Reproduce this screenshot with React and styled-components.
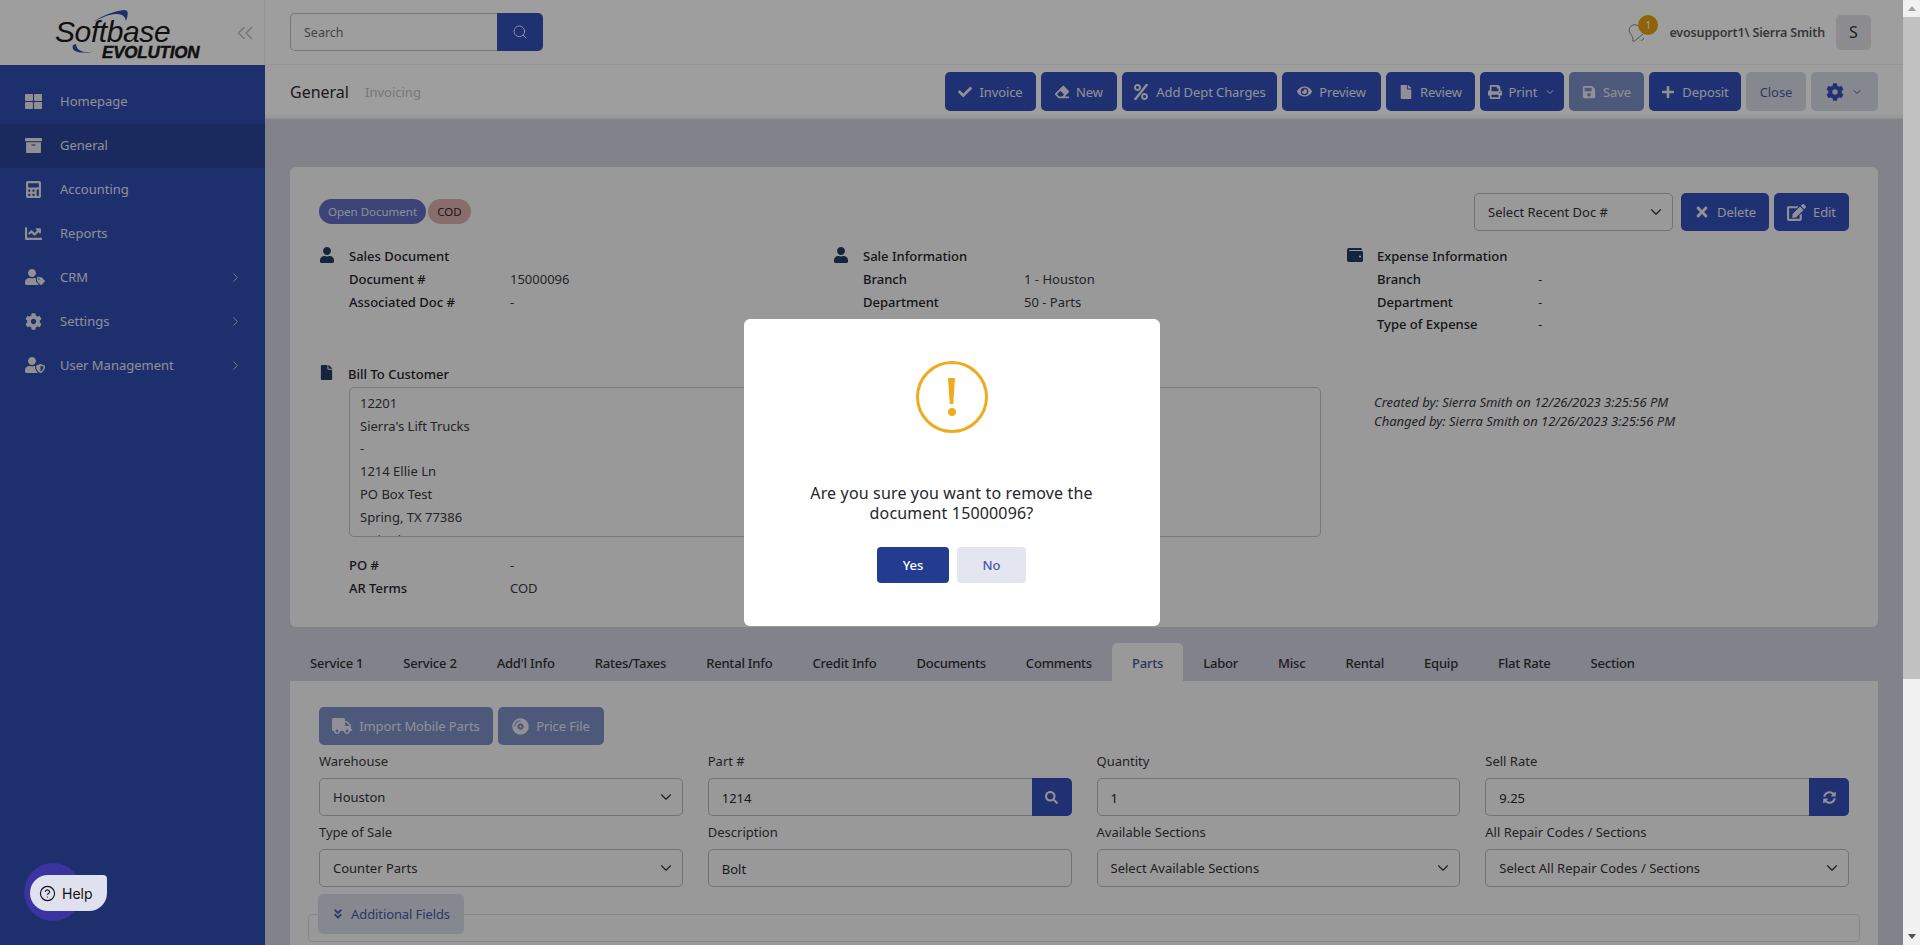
import React from "react";
import styled, { createGlobalStyle } from "styled-components";
import { Bell, ChevronDown, ChevronRight, ChevronsLeft, CircleHelp, Search } from "lucide-react";
import {
  FaAngleDoubleDown, FaArchive, FaCalculator, FaChartLine, FaCheck, FaCog, FaCompactDisc, FaEdit, FaEraser, FaEye,
  FaFile, FaPercent, FaPlus, FaPrint, FaSave, FaSearch, FaSyncAlt, FaThLarge, FaTimes, FaTruck, FaUser,
  FaUserShield, FaUserTag, FaWallet,
} from "react-icons/fa";

const FONT = `"Noto Sans", "Open Sans", sans-serif`;
const PRIMARY = "#324fb9";

const Global = createGlobalStyle`
  html, body { margin: 0; padding: 0; height: 100%; overflow: hidden; }
  body { font-family: ${FONT}; font-size: 13px; color: #2a2a2e; }
  * { box-sizing: border-box; }
`;

const Shell = styled.div`display: flex; width: 1920px; height: 945px; overflow: hidden;`;
const Viewport = styled.div`position: relative; display: flex; flex: 1; height: 945px; overflow: hidden; background: #d0d2df;`;

const ScrollTrack = styled.div`
  width: 17px; height: 945px; background: #f1f1f1; display: flex; flex-direction: column; flex: none;
`;
const ScrollArrow = styled.div`
  height: 17px; flex: none; display: flex; align-items: center; justify-content: center;
  &::after {
    content: ""; border-left: 4px solid transparent; border-right: 4px solid transparent;
    ${(p) => (p.$down ? "border-top: 5px solid #505050;" : "border-bottom: 5px solid #a3a3a3;")}
  }
`;
const ScrollThumb = styled.div`height: 662px; flex: none; background: #c1c1c1;`;
const ScrollGap = styled.div`flex: 1;`;

const Sidebar = styled.aside`width: 265px; flex: none; display: flex; flex-direction: column; background: #304cb1;`;
const Brand = styled.div`
  height: 65px; flex: none; background: #fff; display: flex; align-items: center; padding-left: 55px; position: relative;
  border-right: 1px solid #f0f0f0;
`;
const Logo = styled.div`position: relative; width: 150px; height: 58px; flex: none;`;
const LogoWord = styled.span`
  position: absolute; left: 0; top: 14px; font: italic 400 30px/28px "Liberation Sans", sans-serif;
  letter-spacing: -0.4px; color: #1a1a1a;
`;
const LogoSub = styled.span`
  position: absolute; left: 47px; top: 42px; font: italic 700 17px/14px "Liberation Sans", sans-serif;
  letter-spacing: -0.2px; color: #1a1a1a; -webkit-text-stroke: 0.5px #1a1a1a;
`;
const LogoSwoosh = styled.svg`position: absolute; left: 0; top: 0;`;
const Collapse = styled.span`position: absolute; left: 232px; top: 20px; color: #c4c4c8; display: flex;`;

const Nav = styled.nav`display: flex; flex-direction: column; padding-top: 15px;`;
const NavItem = styled.a`
  height: 44px; display: flex; align-items: center; padding: 0 22px 2px 25px;
  font-size: 13px; background: ${(p) => (p.$active ? "#2c4498" : "transparent")};
  svg.main {
    width: ${(p) => (p.$wide ? 20 : 17)}px; height: ${(p) => (p.$wide ? 20 : 17)}px;
    margin-right: ${(p) => (p.$wide ? 15 : 18)}px; flex: none; color: #e8e8ee;
  }
  svg.arrow { margin-left: auto; color: #c4c8de; }
  span { color: #e4e6f2; }
`;

const Main = styled.main`flex: 1; min-width: 0; display: flex; flex-direction: column;`;
const TopBar = styled.header`
  height: 65px; flex: none; background: #fff; display: flex; align-items: center; padding: 0 32px 0 25px;
  border-bottom: 1px solid #f0f0f0;
`;
const SearchGroup = styled.div`display: flex; width: 253px; height: 38px;`;
const SearchField = styled.div`
  flex: 1; border: 1px solid #bfc0c8; border-right: 0; border-radius: 5px 0 0 5px; padding: 0 13px;
  display: flex; align-items: center; color: #6d6d72; font-size: 12.5px;
`;
const SearchBtn = styled.button`
  width: 46px; border: 0; background: ${PRIMARY}; border-radius: 0 5px 5px 0; color: #e8e8f0;
  display: flex; align-items: center; justify-content: center;
`;
const UserArea = styled.div`margin-left: auto; display: flex; align-items: center;`;
const BellWrap = styled.div`position: relative; width: 24px; height: 30px; margin: 2px 20px 0 0; color: #8b8b90; display: flex; align-items: center; justify-content: center;`;
const BellBadge = styled.span`
  position: absolute; right: -9px; top: -3px; width: 20px; height: 20px; border-radius: 50%; background: #e9a00f;
  color: #fff; font-size: 10px; display: flex; align-items: center; justify-content: center;
`;
const UserName = styled.span`font-size: 12.5px; font-weight: 600; letter-spacing: -0.15px; color: #5b5b60; margin-right: 11px;`;
const Avatar = styled.span`
  width: 35px; height: 35px; border-radius: 5px; background: #e4e4e8; display: flex; align-items: center;
  justify-content: center; font-size: 16px; color: #333;
`;

const ActionBar = styled.div`
  height: 54px; flex: none; background: #fff; display: flex; align-items: center; padding: 0 25px;
  border-bottom: 1px solid #e8e8e8; box-shadow: inset 0 -3px 0 #f5f5f5;
`;
const Crumb = styled.span`font-size: 16px; color: #2c2c30; margin-right: 16px;`;
const CrumbSub = styled.span`font-size: 13px; color: #c0c0c5;`;
const Actions = styled.div`margin-left: auto; display: flex; gap: 5px;`;
const Btn = styled.button`
  height: ${(p) => p.$h || 39}px; width: ${(p) => p.$w}px; border: 0; border-radius: 5px; font-family: ${FONT}; font-size: 13px;
  letter-spacing: -0.1px; display: flex; align-items: center; justify-content: center; gap: 7px; padding: 0; white-space: nowrap;
  color: ${(p) => (p.$variant === "soft" ? "#4c5a9a" : "#e8e9f2")};
  background: ${(p) => (p.$variant === "soft" ? "#d9dbe8" : p.$variant === "faded" ? "#7d90c6" : PRIMARY)};
  svg { flex: none; }
`;

const Content = styled.div`flex: 1; min-height: 0; padding: 48px 25px 0;`;
const Card = styled.section`
  height: 460px; background: #f7f7f7; border-radius: 6px; padding: 32px 29px 0; display: flex; flex-direction: column;
`;
const CardTop = styled.div`display: flex; justify-content: space-between; height: 38px;`;
const Badges = styled.div`display: flex; gap: 2px; height: 25px;`;
const Badge = styled.span`
  height: 25px; border-radius: 13px; padding: 0 9px; font-size: 11.5px; display: flex; align-items: center;
  color: ${(p) => (p.$tone === "blue" ? "#e4e5f2" : "#3a2020")};
  background: ${(p) => (p.$tone === "blue" ? "#5f6cc0" : "#dcb0b0")};
`;
const DocControls = styled.div`display: flex; gap: 5px; margin-top: -6px;`;
const Select = styled.div`
  height: ${(p) => p.$h || 38}px; width: ${(p) => (p.$w ? p.$w + "px" : "100%")}; border: 1px solid #b9b9be; border-radius: 5px;
  display: flex; align-items: center; justify-content: space-between; padding: 0 7px 1px 13px; font-size: 13px; color: #333;
  margin-right: ${(p) => p.$mr || 0}px;
  svg { color: #333; flex: none; }
`;

const InfoGrid = styled.div`display: grid; grid-template-columns: 514px 514px 1fr; margin-top: 8px;`;
const InfoBlock = styled.div`display: grid; grid-template-columns: 30px 161px 1fr; grid-auto-rows: 22.7px; align-items: center;`;
const InfoIcon = styled.span`color: #243d60; display: flex; margin-top: -3px; grid-column: 1;`;
const InfoTitle = styled.span`font-weight: 500; font-size: 13px; color: #25252a; grid-column: 2 / 4;`;
const InfoLabel = styled.span`font-weight: 500; font-size: 13px; color: #25252a; grid-column: 2;`;
const InfoValue = styled.span`font-size: 13px; color: #3a3a3f; grid-column: 3; white-space: nowrap;`;

const BillRow = styled.div`display: grid; grid-template-columns: 1002px 1fr; margin-top: 27px;`;
const BillLeft = styled.div`display: flex; flex-direction: column;`;
const BillTitle = styled.div`display: flex; align-items: center; height: 22px; font-weight: 500; color: #25252a; svg { color: #243d60; margin-right: 14px; margin-top: -3px; }`;
const AddressBox = styled.div`
  margin: 2px 0 0 30px; height: 150px; border: 1px solid #c4c4c8; border-radius: 5px; padding: 4px 10px; overflow: hidden;
  line-height: 22.8px; font-size: 13px; color: #3a3a3f;
`;
const AddressLine = styled.div``;
const Audit = styled.div`padding: 30px 0 0 53px; font-style: italic; font-size: 13px; line-height: 19.5px; color: #38383d; white-space: nowrap;`;
const TermsBlock = styled(InfoBlock)`margin-top: 17px;`;

const Tabs = styled.div`display: flex; margin-top: 16px; height: 38px; align-items: stretch;`;
const Tab = styled.div`
  padding: 1px 20px 0; display: flex; align-items: center; font-size: 13px; letter-spacing: -0.2px; border-radius: 5px 5px 0 0; font-weight: 500;
  color: ${(p) => (p.$active ? "#45569f" : "#303034")};
  background: ${(p) => (p.$active ? "#f7f7f7" : "transparent")};
`;
const Panel = styled.section`background: #f7f7f7; height: 264px; padding: 26px 29px 0;`;
const PanelButtons = styled.div`display: flex; gap: 5px;`;
const FormGrid = styled.div`display: grid; grid-template-columns: repeat(4, 1fr); column-gap: 25px; margin-top: 7px;`;
const Field = styled.div`display: flex; flex-direction: column;`;
const FieldLabel = styled.label`font-size: 13px; height: 19px; line-height: 19px; color: #38383d; margin-bottom: 7px;`;
const FieldGap = styled.div`height: 7px;`;
const InputWrap = styled.div`display: flex; height: 38px;`;
const Input = styled.div`
  flex: 1; border: 1px solid #b9b9be; border-radius: ${(p) => (p.$joined ? "5px 0 0 5px" : "5px")}; display: flex; align-items: center;
  padding: 1px 13px 0; font-size: 13px; color: #2a2a2e; ${(p) => p.$joined && "border-right: 0;"}
`;
const AddonBtn = styled.button`
  width: 40px; border: 0; background: ${PRIMARY}; color: #e8e8f0; border-radius: 0 5px 5px 0; display: flex;
  align-items: center; justify-content: center;
`;
const MoreWrap = styled.div`position: relative; margin: 7px -11px 0; height: 48px;`;
const MoreBox = styled.div`position: absolute; left: 0; right: 0; top: 20px; height: 28px; border: 1px solid #dcdce0; border-radius: 4px;`;
const MoreBtn = styled.button`
  position: absolute; left: 10px; top: 0; width: 146px; height: 40px; border: 0; border-radius: 5px; background: #d9dbe8; color: #4c5a9a;
  font-family: ${FONT}; font-size: 13px; letter-spacing: -0.1px; display: flex; align-items: center; justify-content: center; gap: 7px;
`;

const Overlay = styled.div`
  position: absolute; inset: 0; background: rgba(0,0,0,0.38); display: flex; align-items: center; justify-content: center; z-index: 10;
`;
const Dialog = styled.div`
  width: 416px; height: 307px; background: #fff; border-radius: 6px; display: flex; flex-direction: column; align-items: center;
  padding-top: 42px;
`;
const WarnIcon = styled.div`
  width: 72px; height: 72px; border: 3.5px solid #f0ab1c; border-radius: 50%; display: flex; flex-direction: column;
  align-items: center; justify-content: center; gap: 4px;
`;
const WarnBar = styled.span`width: 7px; height: 26px; background: #f0ab1c; clip-path: polygon(0 0, 100% 0, 75% 100%, 25% 100%);`;
const WarnDot = styled.span`width: 8px; height: 8px; border-radius: 50%; background: #f0ab1c;`;
const DialogText = styled.p`margin: 50px 0 0; width: 300px; text-align: center; font-size: 16px; letter-spacing: 0.15px; line-height: 20px; color: #26262b;`;
const DialogActions = styled.div`display: flex; gap: 8px; margin-top: 24px;`;
const DialogBtn = styled.button`
  height: 36px; width: ${(p) => p.$w}px; border: 0; border-radius: 4px; font-family: ${FONT}; font-size: 13px; font-weight: 500;
  color: ${(p) => (p.$primary ? "#fff" : "#4a58a8")}; background: ${(p) => (p.$primary ? "#243c8f" : "#e3e6f0")};
`;

const HelpSpot = styled.div`
  position: absolute; left: 24px; top: 863px; width: 58px; height: 58px; border-radius: 50%; background: #3a33a0; z-index: 11;
`;
const HelpPill = styled.div`
  position: absolute; left: 30px; top: 875px; width: 77px; height: 36px; border-radius: 18px 4px 18px 18px; background: #e0e1ee;
  z-index: 12; display: flex; align-items: center; gap: 6px; padding-left: 9px; color: #111; font: 400 14px "Inter", sans-serif;
`;

const nav = [
  { l: "Homepage", I: FaThLarge }, { l: "General", I: FaArchive, active: true }, { l: "Accounting", I: FaCalculator },
  { l: "Reports", I: FaChartLine }, { l: "CRM", I: FaUserTag, arrow: true, wide: true }, { l: "Settings", I: FaCog, arrow: true },
  { l: "User Management", I: FaUserShield, arrow: true, wide: true },
];
const actions = [
  { l: "Invoice", I: FaCheck, w: 91, s: 14 }, { l: "New", I: FaEraser, w: 76, s: 14 }, { l: "Add Dept Charges", I: FaPercent, w: 155, s: 16 },
  { l: "Preview", I: FaEye, w: 99, s: 15 }, { l: "Review", I: FaFile, w: 89, s: 14 }, { l: "Print", I: FaPrint, w: 84, chev: true, s: 14 },
  { l: "Save", I: FaSave, w: 75, v: "faded", s: 14 }, { l: "Deposit", I: FaPlus, w: 92, s: 14 }, { l: "Close", w: 60, v: "soft" },
  { I: FaCog, w: 67, v: "soft", chev: true, s: 18 },
];
const tabs = ["Service 1", "Service 2", "Add'l Info", "Rates/Taxes", "Rental Info", "Credit Info", "Documents", "Comments", "Parts", "Labor", "Misc", "Rental", "Equip", "Flat Rate", "Section"];
const address = ["12201", "Sierra's Lift Trucks", "-", "1214 Ellie Ln", "PO Box Test", "Spring, TX 77386", "United States"];

function Info({ Icon, title, rows }) {
  return (
    <InfoBlock>
      <InfoIcon><Icon size={16} /></InfoIcon>
      <InfoTitle>{title}</InfoTitle>
      {rows.map(([k, v]) => (
        <React.Fragment key={k}>
          <InfoLabel>{k}</InfoLabel>
          <InfoValue>{v}</InfoValue>
        </React.Fragment>
      ))}
    </InfoBlock>
  );
}

export default function App() {
  return (
    <Shell>
      <Global />
      <Viewport>
        <Sidebar>
          <Brand>
            <Logo>
              <LogoSwoosh width="150" height="58" viewBox="0 0 150 58">
                <path d="M38 18 C48 11 60 7 69 6 C73 6 74 9 71 17 C70 11 66 10 60 10 C52 11 45 14 38 18 Z" fill="#2c4bb0" />
                <path d="M18 41 C15 50 30 50 47 46 C34 49 22 50 21 40 Z" fill="#2c4bb0" />
              </LogoSwoosh>
              <LogoWord>Softbase</LogoWord>
              <LogoSub>EVOLUTION</LogoSub>
            </Logo>
            <Collapse><ChevronsLeft size={26} strokeWidth={1.5} /></Collapse>
          </Brand>
          <Nav>
            {nav.map(({ l, I, active, arrow, wide }) => (
              <NavItem key={l} $active={active} $wide={wide}>
                <I className="main" />
                <span>{l}</span>
                {arrow && <ChevronRight className="arrow" size={15} strokeWidth={1.5} />}
              </NavItem>
            ))}
          </Nav>
        </Sidebar>
        <Main>
          <TopBar>
            <SearchGroup>
              <SearchField>Search</SearchField>
              <SearchBtn><Search size={16} strokeWidth={1.5} /></SearchBtn>
            </SearchGroup>
            <UserArea>
              <BellWrap>
                <Bell size={22} strokeWidth={1} style={{ transform: "rotate(-40deg)" }} />
                <BellBadge>1</BellBadge>
              </BellWrap>
              <UserName>evosupport1\ Sierra Smith</UserName>
              <Avatar>S</Avatar>
            </UserArea>
          </TopBar>
          <ActionBar>
            <Crumb>General</Crumb>
            <CrumbSub>Invoicing</CrumbSub>
            <Actions>
              {actions.map(({ l, I, w, v, chev, s }, i) => (
                <Btn key={i} $w={w} $variant={v}>
                  {I && <I size={s} color={v === "soft" ? "#324fb9" : undefined} />}
                  {l}
                  {chev && <ChevronDown size={12} />}
                </Btn>
              ))}
            </Actions>
          </ActionBar>
          <Content>
            <Card>
              <CardTop>
                <Badges>
                  <Badge $tone="blue">Open Document</Badge>
                  <Badge>COD</Badge>
                </Badges>
                <DocControls>
                  <Select $w={199} $mr={3}>Select Recent Doc # <ChevronDown size={18} strokeWidth={1.5} /></Select>
                  <Btn $w={88} $h={38}><FaTimes size={16} />Delete</Btn>
                  <Btn $w={75} $h={38}><FaEdit size={19} />Edit</Btn>
                </DocControls>
              </CardTop>
              <InfoGrid>
                <Info Icon={FaUser} title="Sales Document" rows={[["Document #", "15000096"], ["Associated Doc #", "-"]]} />
                <Info Icon={FaUser} title="Sale Information" rows={[["Branch", "1 - Houston"], ["Department", "50 - Parts"], ["Type of Sale", "Counter Parts Sales -T"]]} />
                <Info Icon={FaWallet} title="Expense Information" rows={[["Branch", "-"], ["Department", "-"], ["Type of Expense", "-"]]} />
              </InfoGrid>
              <BillRow>
                <BillLeft>
                  <BillTitle><FaFile size={15} />Bill To Customer</BillTitle>
                  <AddressBox>
                    {address.map((a) => <AddressLine key={a}>{a}</AddressLine>)}
                  </AddressBox>
                  <TermsBlock>
                    <InfoLabel>PO #</InfoLabel><InfoValue>-</InfoValue>
                    <InfoLabel>AR Terms</InfoLabel><InfoValue>COD</InfoValue>
                  </TermsBlock>
                </BillLeft>
                <Audit>
                  <div>Created by: Sierra Smith on 12/26/2023 3:25:56 PM</div>
                  <div>Changed by: Sierra Smith on 12/26/2023 3:25:56 PM</div>
                </Audit>
              </BillRow>
            </Card>
            <Tabs>
              {tabs.map((t) => <Tab key={t} $active={t === "Parts"}>{t}</Tab>)}
            </Tabs>
            <Panel>
              <PanelButtons>
                <Btn $w={174} $h={38} $variant="faded"><FaTruck size={20} />Import Mobile Parts</Btn>
                <Btn $w={106} $h={38} $variant="faded"><FaCompactDisc size={17} />Price File</Btn>
              </PanelButtons>
              <FormGrid>
                <Field>
                  <FieldLabel>Warehouse</FieldLabel>
                  <Select>Houston <ChevronDown size={18} strokeWidth={1.5} /></Select>
                  <FieldGap />
                  <FieldLabel>Type of Sale</FieldLabel>
                  <Select>Counter Parts <ChevronDown size={18} strokeWidth={1.5} /></Select>
                </Field>
                <Field>
                  <FieldLabel>Part #</FieldLabel>
                  <InputWrap><Input $joined>1214</Input><AddonBtn><FaSearch size={13} /></AddonBtn></InputWrap>
                  <FieldGap />
                  <FieldLabel>Description</FieldLabel>
                  <InputWrap><Input>Bolt</Input></InputWrap>
                </Field>
                <Field>
                  <FieldLabel>Quantity</FieldLabel>
                  <InputWrap><Input>1</Input></InputWrap>
                  <FieldGap />
                  <FieldLabel>Available Sections</FieldLabel>
                  <Select>Select Available Sections <ChevronDown size={18} strokeWidth={1.5} /></Select>
                </Field>
                <Field>
                  <FieldLabel>Sell Rate</FieldLabel>
                  <InputWrap><Input $joined>9.25</Input><AddonBtn><FaSyncAlt size={13} /></AddonBtn></InputWrap>
                  <FieldGap />
                  <FieldLabel>All Repair Codes / Sections</FieldLabel>
                  <Select>Select All Repair Codes / Sections <ChevronDown size={18} strokeWidth={1.5} /></Select>
                </Field>
              </FormGrid>
              <MoreWrap>
                <MoreBox />
                <MoreBtn><FaAngleDoubleDown size={12} />Additional Fields</MoreBtn>
              </MoreWrap>
            </Panel>
          </Content>
        </Main>
        <Overlay>
          <Dialog>
            <WarnIcon><WarnBar /><WarnDot /></WarnIcon>
            <DialogText>Are you sure you want to remove the document 15000096?</DialogText>
            <DialogActions>
              <DialogBtn $primary $w={72}>Yes</DialogBtn>
              <DialogBtn $w={69}>No</DialogBtn>
            </DialogActions>
          </Dialog>
        </Overlay>
        <HelpSpot />
        <HelpPill><CircleHelp size={17} strokeWidth={1.6} />Help</HelpPill>
      </Viewport>
      <ScrollTrack>
        <ScrollArrow />
        <ScrollThumb />
        <ScrollGap />
        <ScrollArrow $down />
      </ScrollTrack>
    </Shell>
  );
}
